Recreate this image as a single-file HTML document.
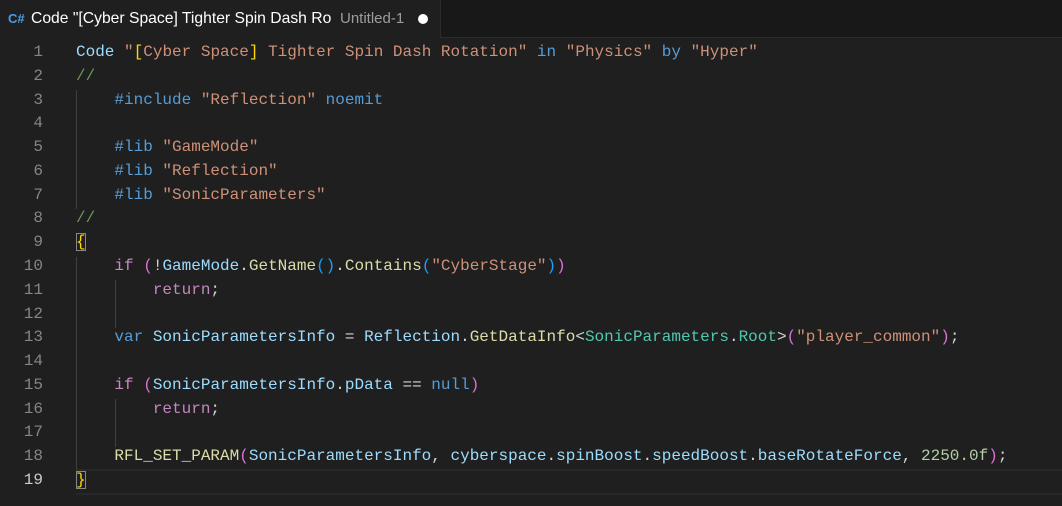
<!DOCTYPE html>
<html><head><style>
body{margin:0;width:1062px;height:506px;background:#1f1f1f;overflow:hidden;position:relative;font-family:"Liberation Mono",monospace}
.tabs{position:absolute;left:0;top:0;width:1062px;height:38px;background:#181818}
.tabbar-line{position:absolute;left:440px;top:37px;width:622px;height:1px;background:#2b2b2b}
.tab{position:absolute;left:0;top:0;width:440px;height:38px;background:#1f1f1f;border-right:1px solid #2b2b2b;font-family:"Liberation Sans",sans-serif;font-size:15.7px;color:#fff;line-height:37px;white-space:nowrap}
.tab .ic{position:absolute;left:8px;top:0;color:#4c9be8;font-weight:bold;font-size:13px}
.tab .t{position:absolute;left:31px}
.tab .u{position:absolute;left:340px;color:#9d9d9d;font-size:15px}
.tab .dot{position:absolute;left:418px;top:14px;width:10px;height:10px;border-radius:50%;background:#fff}
.ln{position:absolute;left:0;width:43px;text-align:right;color:#858585;font-size:16px}
.code{position:absolute;left:76px;white-space:pre;font-size:16px;color:#d4d4d4}
.g{position:absolute;width:1px;background:#404040}
.k{color:#569cd6}.s{color:#ce9178}.c{color:#6a9955}.f{color:#dcdcaa}.v{color:#9cdcfe}.t2{color:#4ec9b0}.p{color:#c586c0}.n{color:#b5cea8}
.y{color:#ffd700}.m{color:#da70d6}.b{color:#179fff}
.bx{outline:1px solid #888;outline-offset:-1px}
.cur{position:absolute;left:76px;top:469px;width:986px;height:22px;border-top:2px solid #282828;border-bottom:2px solid #282828}
</style></head><body>
<div class="tabs"><div class="tab"><span class="ic">C#</span><span class="t">Code "[Cyber Space] Tighter Spin Dash Ro</span><span class="u">Untitled-1</span><span class="dot"></span></div></div>
<div class="tabbar-line"></div>
<div class="cur"></div>
<div class="g" style="left:76px;top:90px;height:119px"></div>
<div class="g" style="left:76px;top:257px;height:213px"></div>
<div class="g" style="left:115px;top:280px;height:48px"></div>
<div class="g" style="left:115px;top:399px;height:48px"></div>
<div id="L"></div>
<script>
var lines=[
'<span class="v">Code</span> <span class="s">"<span class="y">[</span>Cyber Space<span class="y">]</span> Tighter Spin Dash Rotation"</span> <span class="k">in</span> <span class="s">"Physics"</span> <span class="k">by</span> <span class="s">"Hyper"</span>',
'<span class="c">//</span>',
'    <span class="k">#include</span> <span class="s">"Reflection"</span> <span class="k">noemit</span>',
'',
'    <span class="k">#lib</span> <span class="s">"GameMode"</span>',
'    <span class="k">#lib</span> <span class="s">"Reflection"</span>',
'    <span class="k">#lib</span> <span class="s">"SonicParameters"</span>',
'<span class="c">//</span>',
'<span class="y bx">{</span>',
'    <span class="p">if</span> <span class="m">(</span>!<span class="v">GameMode</span>.<span class="f">GetName</span><span class="b">()</span>.<span class="f">Contains</span><span class="b">(</span><span class="s">"CyberStage"</span><span class="b">)</span><span class="m">)</span>',
'        <span class="p">return</span>;',
'',
'    <span class="k">var</span> <span class="v">SonicParametersInfo</span> = <span class="v">Reflection</span>.<span class="f">GetDataInfo</span>&lt;<span class="t2">SonicParameters</span>.<span class="t2">Root</span>&gt;<span class="m">(</span><span class="s">"player_common"</span><span class="m">)</span>;',
'',
'    <span class="p">if</span> <span class="m">(</span><span class="v">SonicParametersInfo</span>.<span class="v">pData</span> == <span class="k">null</span><span class="m">)</span>',
'        <span class="p">return</span>;',
'',
'    <span class="f">RFL_SET_PARAM</span><span class="m">(</span><span class="v">SonicParametersInfo</span>, <span class="v">cyberspace</span>.<span class="v">spinBoost</span>.<span class="v">speedBoost</span>.<span class="v">baseRotateForce</span>, <span class="n">2250.0f</span><span class="m">)</span>;',
'<span class="y bx">}</span>'];
var h='';for(var i=0;i<lines.length;i++){var t=43+i*23.78;
h+='<div class="ln" style="top:'+t+'px;'+(i==18?'color:#cccccc':'')+'">'+(i+1)+'</div><div class="code" style="top:'+t+'px">'+lines[i]+'</div>';}
document.getElementById('L').innerHTML=h;
</script>
</body></html>
